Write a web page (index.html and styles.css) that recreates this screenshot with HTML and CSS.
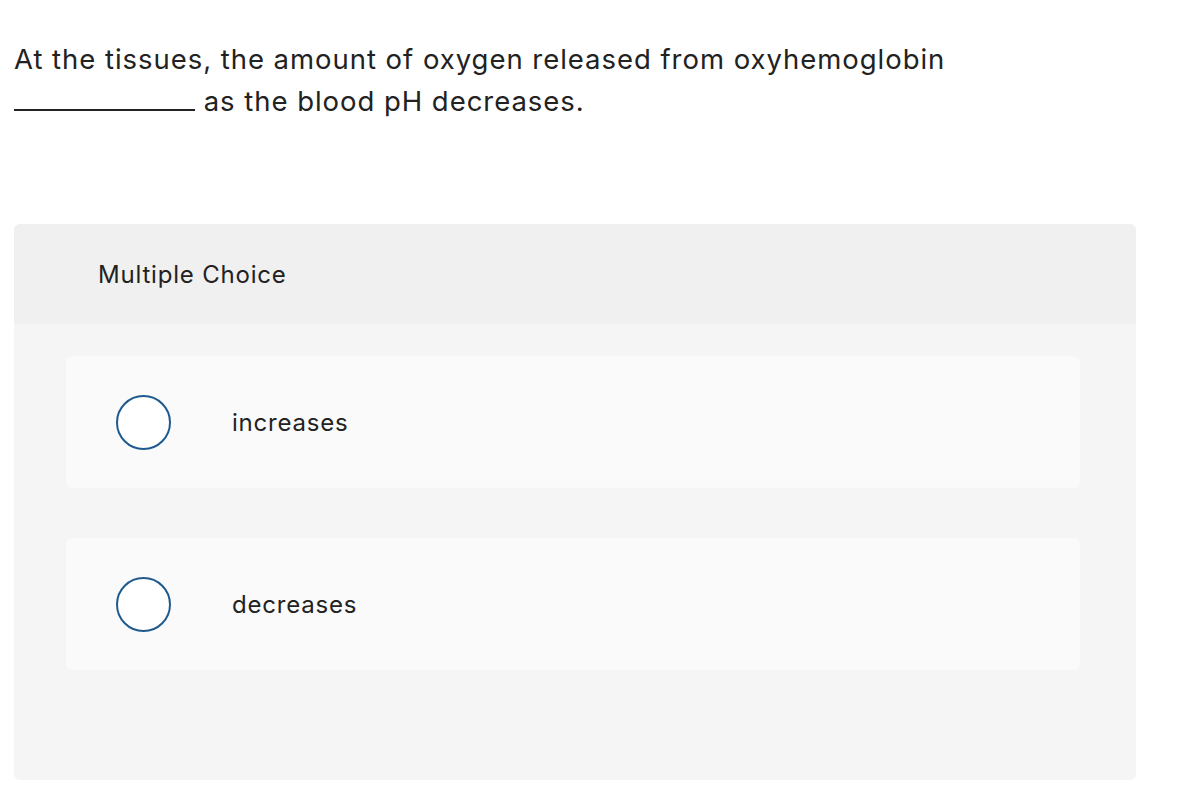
FILE: index.html
```html
<!DOCTYPE html>
<html lang="en">
<head>
  <meta charset="UTF-8">
  <meta name="viewport" content="width=device-width, initial-scale=1.0">
  <title>Multiple Choice</title>
  <link rel="stylesheet" href="styles.css">
</head>
<body>
  <div class="question">
    <p class="prompt">
      At the tissues, the amount of oxygen released from oxyhemoglobin<br>
      <span class="blank"></span> as the blood pH decreases.
    </p>
  </div>

  <div class="choice-panel">
    <div class="choice-header">Multiple Choice</div>
    <div class="choice-list">
      <label class="option">
        <span class="radio"></span>
        <span class="option-text">increases</span>
      </label>
      <label class="option">
        <span class="radio"></span>
        <span class="option-text">decreases</span>
      </label>
    </div>
  </div>
</body>
</html>
```

FILE: styles.css
```css
* {
  box-sizing: border-box;
}

body {
  margin: 0;
  padding: 0 50px 0 14px;
  font-family: Inter, Lato, Arial, sans-serif;
  color: #222;
  background: #fff;
  letter-spacing: 0.05em;
}

.question {
  padding-top: 38px;
  height: 224px;
}

.prompt {
  margin: 0;
  font-size: 27.5px;
  line-height: 42px;
  letter-spacing: 0.035em;
}

.blank {
  display: inline-block;
  width: 181px;
  border-bottom: 2px solid #222;
}

.choice-panel {
  background: #f5f5f5;
  border-radius: 6px;
  overflow: hidden;
  width: 1122px;
}

.choice-header {
  background: #f0f0f0;
  height: 100px;
  padding-left: 84px;
  display: flex;
  align-items: center;
  font-size: 24px;
}

.choice-list {
  display: flex;
  flex-direction: column;
  gap: 50px;
  padding: 32px 56px 110px 52px;
}

.option {
  display: flex;
  align-items: center;
  height: 132px;
  background: #fafafa;
  border-radius: 6px;
  padding-left: 50px;
  cursor: pointer;
}

.radio {
  width: 55px;
  height: 55px;
  border-radius: 50%;
  border: 2px solid #1f5a8f;
  background: #fff;
  flex-shrink: 0;
}

.option-text {
  margin-left: 61px;
  font-size: 24px;
}
```
